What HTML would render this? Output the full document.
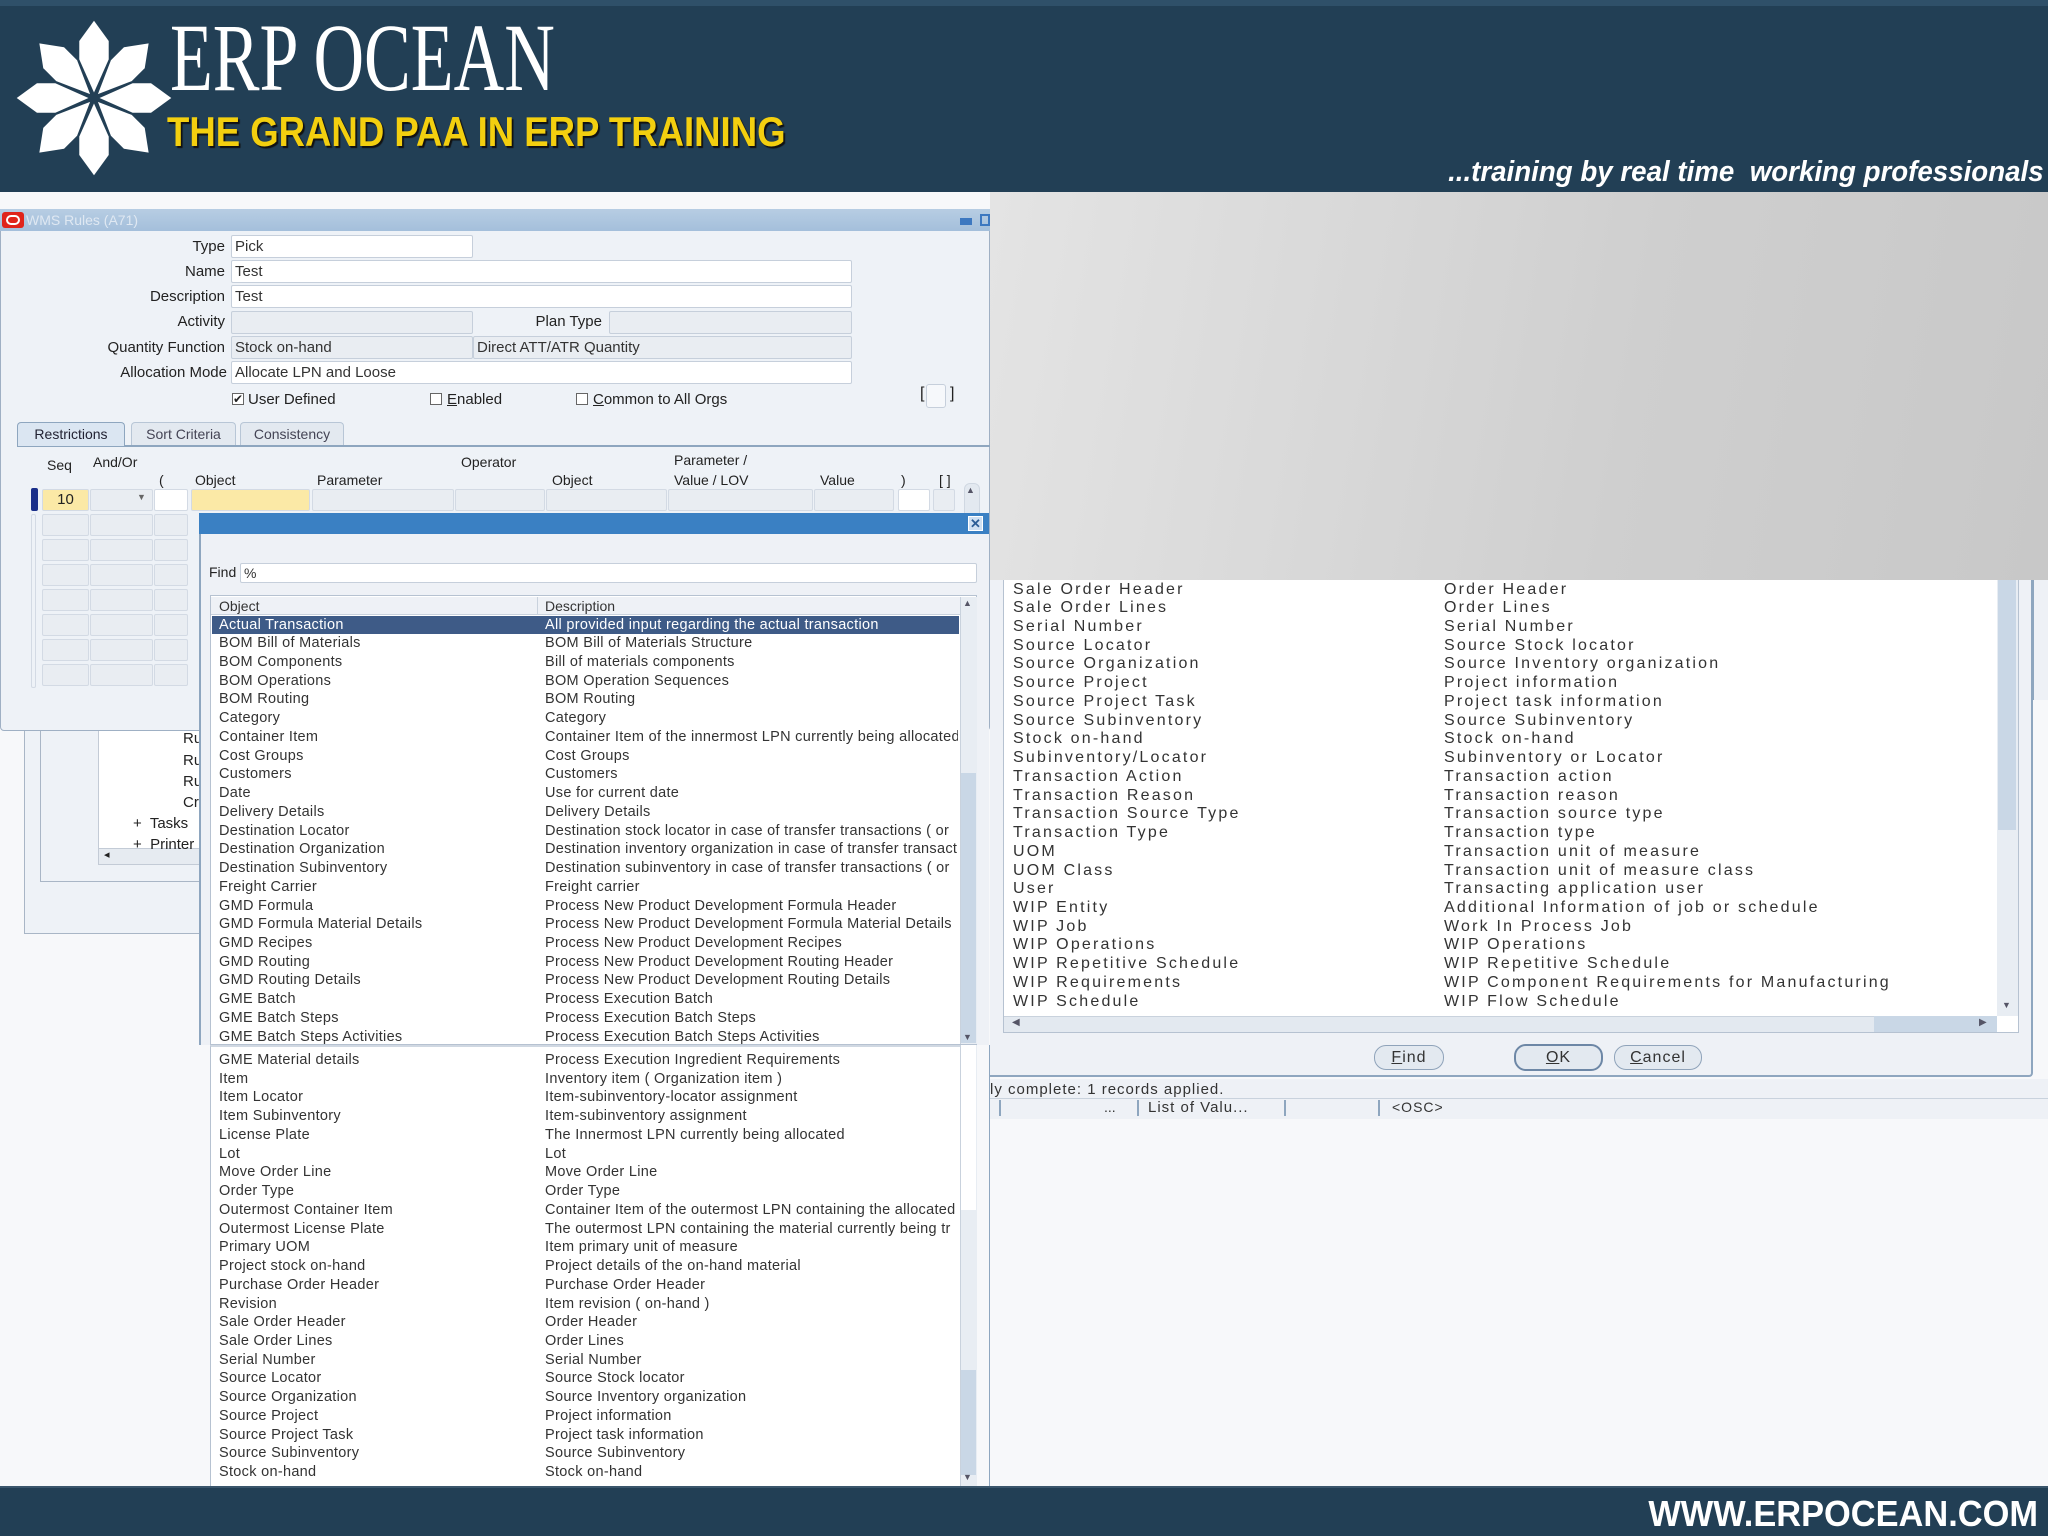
<!DOCTYPE html>
<html><head><meta charset="utf-8">
<style>
*{margin:0;padding:0;box-sizing:border-box}
body{width:2048px;height:1536px;position:relative;overflow:hidden;background:#f7f8fa;font-family:"Liberation Sans",sans-serif;color:#222}
.abs{position:absolute}
.hdr{left:0;top:0;width:2048px;height:192px;background:#223f55;border-top:6px solid #2f5069}
.ftr{left:0;top:1486px;width:2048px;height:50px;background:#223f55;border-top:2px solid #3a566c}
.fld{position:absolute;height:23px;background:#fff;border:1px solid #c6cfdb;border-radius:2px;font-size:15px;line-height:21px;padding-left:3px;color:#333}
.gf{background:#e9edf2}
.lbl{position:absolute;font-size:15px;color:#222;text-align:right;white-space:nowrap}
.t{position:absolute;font-size:15px;white-space:nowrap;color:#222}
.row{height:18.74px;line-height:18.74px;font-size:14.5px;letter-spacing:0.3px;white-space:nowrap;position:relative;color:#333}
.row span{position:absolute;top:0;overflow:hidden}
.row .a{left:9px;width:320px}
.row .b{left:335px;width:413px}
.rr{height:18.74px;line-height:18.74px;font-size:16px;letter-spacing:2.2px;white-space:nowrap;position:relative;color:#333}
.rr span{position:absolute;top:0}
.rr .a{left:10px}
.rr .b{left:441px}
.cell{position:absolute;height:22px;border:1px solid #d3dae4;border-radius:2px;background:#e9edf2}
.btn{position:absolute;height:25px;border:1px solid #8fa3ba;border-radius:12px;background:#e3e9f0;font-size:16px;line-height:23px;text-align:center;letter-spacing:1px;color:#333}
</style></head><body>

<div class="abs hdr"></div>
<svg class="abs" style="left:0;top:0" width="200" height="192" viewBox="0 0 200 192">
 <g transform="translate(94,98) scale(0.92)" fill="#fff">
  <g id="p"><polygon points="0,-6 16,-42 16,-62 0,-84 -16,-62 -16,-42"/></g>
  <use href="#p" transform="rotate(45)"/><use href="#p" transform="rotate(90)"/><use href="#p" transform="rotate(135)"/>
  <use href="#p" transform="rotate(180)"/><use href="#p" transform="rotate(225)"/><use href="#p" transform="rotate(270)"/><use href="#p" transform="rotate(315)"/>
 </g>
</svg>
<div class="abs" style="left:170px;top:8px;font-family:'Liberation Serif',serif;font-size:96px;color:#fff;transform:scaleX(0.73);transform-origin:0 0;white-space:nowrap;line-height:100px">ERP OCEAN</div>
<div class="abs" style="left:167px;top:108px;font-weight:bold;font-size:42px;color:#f3cf0f;transform:scaleX(0.87);transform-origin:0 0;white-space:nowrap;line-height:48px;text-shadow:2px 2px 1px #111">THE GRAND PAA IN ERP TRAINING</div>
<div class="abs" style="right:4px;top:155px;font-style:italic;font-weight:bold;font-size:29px;color:#fff;transform:scaleX(0.955);transform-origin:100% 0;white-space:nowrap;line-height:34px">...training by real time&nbsp; working professionals</div>

<div class="abs" style="left:990px;top:192px;width:1058px;height:388px;background:linear-gradient(100deg,#e4e4e4,#cfcfcf 60%,#c8c8c8)"></div>

<div class="abs" style="left:24px;top:700px;width:300px;height:234px;border:1px solid #a9b6c6;border-top:none;background:#eef2f7"></div>
<div class="abs" style="left:40px;top:700px;width:280px;height:182px;border:1px solid #a9b6c6;border-top:none;background:#eef2f7"></div>
<div class="abs" style="left:98px;top:700px;width:220px;height:165px;background:#fff;border-left:1px solid #c3cbd6"></div>
<div class="abs" style="left:98px;top:848px;width:220px;height:17px;background:#e6ebf1;border:1px solid #c3cbd6"></div>
<div class="t" style="left:104px;top:848px;font-size:11px">◂</div>
<div class="t" style="left:183px;top:730px">Ru</div>
<div class="t" style="left:183px;top:752px">Ru</div>
<div class="t" style="left:183px;top:773px">Ru</div>
<div class="t" style="left:183px;top:794px">Cr</div>
<div class="t" style="left:133px;top:815px">+&nbsp; Tasks</div>
<div class="t" style="left:133px;top:836px">+&nbsp; Printer</div>

<div class="abs" style="left:0;top:209px;width:990px;height:522px;background:#eef2f7;border:1px solid #9fb0c4;border-radius:0 0 4px 4px"></div>
<div class="abs" style="left:0;top:209px;width:990px;height:22px;background:linear-gradient(#b7cde3,#a4bfdb)"></div>
<div class="abs" style="left:2px;top:212px;width:22px;height:16px;background:#e0241b;border-radius:3px"></div>
<div class="abs" style="left:6px;top:215px;width:14px;height:10px;border:2px solid #fff;border-radius:5px"></div>
<div class="t" style="left:26px;top:212px;color:#dfe8f2;font-size:14px">WMS Rules (A71)</div>
<div class="abs" style="left:960px;top:218px;width:12px;height:7px;background:#3d78c0"></div>
<div class="abs" style="left:980px;top:214px;width:10px;height:12px;border:2px solid #3d78c0"></div>

<div class="lbl" style="right:1823px;top:238px">Type</div>
<div class="fld" style="left:231px;top:235px;width:242px">Pick</div>
<div class="lbl" style="right:1823px;top:263px">Name</div>
<div class="fld" style="left:231px;top:260px;width:621px">Test</div>
<div class="lbl" style="right:1823px;top:288px">Description</div>
<div class="fld" style="left:231px;top:285px;width:621px">Test</div>
<div class="lbl" style="right:1823px;top:313px">Activity</div>
<div class="fld gf" style="left:231px;top:311px;width:242px"></div>
<div class="lbl" style="right:1446px;top:313px">Plan Type</div>
<div class="fld gf" style="left:609px;top:311px;width:243px"></div>
<div class="lbl" style="right:1823px;top:339px">Quantity Function</div>
<div class="fld gf" style="left:231px;top:336px;width:242px">Stock on-hand</div>
<div class="fld gf" style="left:473px;top:336px;width:379px">Direct ATT/ATR Quantity</div>
<div class="lbl" style="right:1821px;top:364px">Allocation Mode</div>
<div class="fld" style="left:231px;top:361px;width:621px">Allocate LPN and Loose</div>

<div class="abs" style="left:232px;top:393px;width:12px;height:12px;border:1px solid #666;background:#fff;font-size:12px;line-height:10px">✔</div>
<div class="t" style="left:248px;top:391px">User Defined</div>
<div class="abs" style="left:430px;top:393px;width:12px;height:12px;border:1px solid #666;background:#fff"></div>
<div class="t" style="left:447px;top:391px"><u>E</u>nabled</div>
<div class="abs" style="left:576px;top:393px;width:12px;height:12px;border:1px solid #666;background:#fff"></div>
<div class="t" style="left:593px;top:391px"><u>C</u>ommon to All Orgs</div>
<div class="t" style="left:920px;top:385px;font-size:16px">[</div>
<div class="abs" style="left:926px;top:384px;width:20px;height:24px;border:1px solid #c6cfdb;border-radius:3px;background:#f6f8fb"></div>
<div class="t" style="left:950px;top:385px;font-size:16px">]</div>

<div class="abs" style="left:17px;top:445px;width:973px;height:2px;background:#8ea6bf"></div>
<div class="abs" style="left:17px;top:422px;width:108px;height:24px;background:#dbe6f2;border:1px solid #8ea6bf;border-bottom:none;border-radius:4px 4px 0 0;font-size:14px;line-height:22px;text-align:center;color:#223">Restrictions</div>
<div class="abs" style="left:131px;top:422px;width:105px;height:23px;background:#e3e9f0;border:1px solid #b8c6d6;border-bottom:none;border-radius:4px 4px 0 0;font-size:14px;line-height:22px;text-align:center;color:#445">Sort Criteria</div>
<div class="abs" style="left:240px;top:422px;width:104px;height:23px;background:#e3e9f0;border:1px solid #b8c6d6;border-bottom:none;border-radius:4px 4px 0 0;font-size:14px;line-height:22px;text-align:center;color:#445">Consistency</div>

<div class="t" style="left:47px;top:457px;font-size:14px">Seq</div>
<div class="t" style="left:93px;top:454px;font-size:14px">And/Or</div>
<div class="t" style="left:461px;top:454px;font-size:14px">Operator</div>
<div class="t" style="left:674px;top:452px;font-size:14px">Parameter /</div>
<div class="t" style="left:159px;top:472px;font-size:14px">(</div>
<div class="t" style="left:195px;top:472px;font-size:14px">Object</div>
<div class="t" style="left:317px;top:472px;font-size:14px">Parameter</div>
<div class="t" style="left:552px;top:472px;font-size:14px">Object</div>
<div class="t" style="left:674px;top:472px;font-size:14px">Value / LOV</div>
<div class="t" style="left:820px;top:472px;font-size:14px">Value</div>
<div class="t" style="left:901px;top:472px;font-size:14px">)</div>
<div class="t" style="left:939px;top:472px;font-size:14px">[ ]</div>

<div class="abs" style="left:31px;top:488px;width:7px;height:23px;background:#1a2f8a;border-radius:2px"></div>
<div class="cell" style="left:42px;top:489px;width:47px;background:#fbe9a6;font-size:15px;line-height:20px;text-align:center">10</div>
<div class="cell" style="left:90px;top:489px;width:63px"></div><div class="t" style="left:137px;top:492px;font-size:9px;color:#666">▼</div>
<div class="cell" style="left:154px;top:489px;width:34px;background:#fff"></div>
<div class="cell" style="left:191px;top:489px;width:119px;background:#fbe9a6"></div>
<div class="cell" style="left:312px;top:489px;width:142px"></div>
<div class="cell" style="left:455px;top:489px;width:90px"></div>
<div class="cell" style="left:546px;top:489px;width:121px"></div>
<div class="cell" style="left:668px;top:489px;width:145px"></div>
<div class="cell" style="left:814px;top:489px;width:80px"></div>
<div class="cell" style="left:898px;top:489px;width:32px;background:#fff"></div>
<div class="cell" style="left:933px;top:489px;width:22px"></div>
<div class="abs" style="left:964px;top:483px;width:16px;height:250px;background:#e3e9f0;border-radius:6px;border:1px solid #d0d8e2"></div>
<div class="t" style="left:966px;top:485px;font-size:9px;color:#556">▲</div>

<div class="cell" style="left:42px;top:514px;width:47px"></div><div class="cell" style="left:90px;top:514px;width:63px"></div><div class="cell" style="left:154px;top:514px;width:34px"></div>
<div class="cell" style="left:42px;top:539px;width:47px"></div><div class="cell" style="left:90px;top:539px;width:63px"></div><div class="cell" style="left:154px;top:539px;width:34px"></div>
<div class="cell" style="left:42px;top:564px;width:47px"></div><div class="cell" style="left:90px;top:564px;width:63px"></div><div class="cell" style="left:154px;top:564px;width:34px"></div>
<div class="cell" style="left:42px;top:589px;width:47px"></div><div class="cell" style="left:90px;top:589px;width:63px"></div><div class="cell" style="left:154px;top:589px;width:34px"></div>
<div class="cell" style="left:42px;top:614px;width:47px"></div><div class="cell" style="left:90px;top:614px;width:63px"></div><div class="cell" style="left:154px;top:614px;width:34px"></div>
<div class="cell" style="left:42px;top:639px;width:47px"></div><div class="cell" style="left:90px;top:639px;width:63px"></div><div class="cell" style="left:154px;top:639px;width:34px"></div>
<div class="cell" style="left:42px;top:664px;width:47px"></div><div class="cell" style="left:90px;top:664px;width:63px"></div><div class="cell" style="left:154px;top:664px;width:34px"></div>
<div class="abs" style="left:31px;top:514px;width:5px;height:174px;border:1px solid #d3dae4;border-radius:2px"></div>

<div class="abs" style="left:199px;top:513px;width:790px;height:532px;background:#eef1f6;border-left:2px solid #8ea6bf"></div>
<div class="abs" style="left:199px;top:513px;width:790px;height:21px;background:#3a80c3"></div>
<div class="abs" style="left:968px;top:516px;width:15px;height:15px;background:#cfe0f2;border:1px solid #fff;color:#2b5d96;font-size:13px;line-height:13px;text-align:center;font-weight:bold">✕</div>
<div class="t" style="left:209px;top:564px;font-size:14px">Find</div>
<div class="fld" style="left:240px;top:563px;width:737px;height:20px;line-height:18px;font-size:14px">%</div>

<div class="abs" style="left:210px;top:595px;width:767px;height:450px;background:#fff;border:1px solid #b6c2d1"></div>
<div class="abs" style="left:211px;top:597px;width:749px;height:18px;background:#eef1f6;border-bottom:1px solid #c9d2dd"></div>
<div class="abs" style="left:537px;top:597px;width:1px;height:18px;background:#c9d2dd"></div>
<div class="t" style="left:219px;top:598px;font-size:14px;color:#333">Object</div>
<div class="t" style="left:545px;top:598px;font-size:14px;color:#333">Description</div>
<div class="abs" style="left:960px;top:597px;width:17px;height:447px;background:#e8edf3;border-left:1px solid #c9d2dd"></div>
<div class="abs" style="left:961px;top:773px;width:15px;height:270px;background:#c9d7e6"></div>
<div class="t" style="left:963px;top:598px;font-size:9px;color:#556">▲</div>
<div class="t" style="left:963px;top:1032px;font-size:9px;color:#556">▼</div>
<div class="abs" style="left:212px;top:616px;width:747px;height:18px;background:#3e5b87"></div>

<div class="abs" style="left:210px;top:615.5px;width:750px">
<div class="row" style="color:#fff"><span class="a">Actual Transaction</span><span class="b">All provided input regarding the actual transaction</span></div>
<div class="row"><span class="a">BOM Bill of Materials</span><span class="b">BOM Bill of Materials Structure</span></div>
<div class="row"><span class="a">BOM Components</span><span class="b">Bill of materials components</span></div>
<div class="row"><span class="a">BOM Operations</span><span class="b">BOM Operation Sequences</span></div>
<div class="row"><span class="a">BOM Routing</span><span class="b">BOM Routing</span></div>
<div class="row"><span class="a">Category</span><span class="b">Category</span></div>
<div class="row"><span class="a">Container Item</span><span class="b">Container Item of the innermost LPN currently being allocated</span></div>
<div class="row"><span class="a">Cost Groups</span><span class="b">Cost Groups</span></div>
<div class="row"><span class="a">Customers</span><span class="b">Customers</span></div>
<div class="row"><span class="a">Date</span><span class="b">Use for current date</span></div>
<div class="row"><span class="a">Delivery Details</span><span class="b">Delivery Details</span></div>
<div class="row"><span class="a">Destination Locator</span><span class="b">Destination stock locator in case of transfer transactions ( or</span></div>
<div class="row"><span class="a">Destination Organization</span><span class="b">Destination inventory organization in case of transfer transactions</span></div>
<div class="row"><span class="a">Destination Subinventory</span><span class="b">Destination subinventory in case of transfer transactions ( or</span></div>
<div class="row"><span class="a">Freight Carrier</span><span class="b">Freight carrier</span></div>
<div class="row"><span class="a">GMD Formula</span><span class="b">Process New Product Development Formula Header</span></div>
<div class="row"><span class="a">GMD Formula Material Details</span><span class="b">Process New Product Development Formula Material Details</span></div>
<div class="row"><span class="a">GMD Recipes</span><span class="b">Process New Product Development Recipes</span></div>
<div class="row"><span class="a">GMD Routing</span><span class="b">Process New Product Development Routing Header</span></div>
<div class="row"><span class="a">GMD Routing Details</span><span class="b">Process New Product Development Routing Details</span></div>
<div class="row"><span class="a">GME Batch</span><span class="b">Process Execution Batch</span></div>
<div class="row"><span class="a">GME Batch Steps</span><span class="b">Process Execution Batch Steps</span></div>
<div class="row"><span class="a">GME Batch Steps Activities</span><span class="b">Process Execution Batch Steps Activities</span></div>
</div>

<div class="abs" style="left:210px;top:1045px;width:750px;height:441px;background:#fff;border-left:1px solid #b6c2d1;border-top:2px solid #d0d8e2"></div>
<div class="abs" style="left:960px;top:1045px;width:17px;height:441px;background:#e8edf3;border-left:1px solid #c9d2dd"></div>
<div class="abs" style="left:961px;top:1045px;width:15px;height:165px;background:#fff"></div>
<div class="abs" style="left:961px;top:1370px;width:15px;height:105px;background:#c9d7e6"></div>
<div class="t" style="left:963px;top:1472px;font-size:9px;color:#556">▼</div>
<div class="abs" style="left:989px;top:1045px;width:1px;height:441px;background:#8ea6bf"></div>
<div class="abs" style="left:210px;top:1051px;width:750px">
<div class="row"><span class="a">GME Material details</span><span class="b">Process Execution Ingredient Requirements</span></div>
<div class="row"><span class="a">Item</span><span class="b">Inventory item ( Organization item )</span></div>
<div class="row"><span class="a">Item Locator</span><span class="b">Item-subinventory-locator assignment</span></div>
<div class="row"><span class="a">Item Subinventory</span><span class="b">Item-subinventory assignment</span></div>
<div class="row"><span class="a">License Plate</span><span class="b">The Innermost LPN currently being allocated</span></div>
<div class="row"><span class="a">Lot</span><span class="b">Lot</span></div>
<div class="row"><span class="a">Move Order Line</span><span class="b">Move Order Line</span></div>
<div class="row"><span class="a">Order Type</span><span class="b">Order Type</span></div>
<div class="row"><span class="a">Outermost Container Item</span><span class="b">Container Item of the outermost LPN containing the allocated</span></div>
<div class="row"><span class="a">Outermost License Plate</span><span class="b">The outermost LPN containing the material currently being tr</span></div>
<div class="row"><span class="a">Primary UOM</span><span class="b">Item primary unit of measure</span></div>
<div class="row"><span class="a">Project stock on-hand</span><span class="b">Project details of the on-hand material</span></div>
<div class="row"><span class="a">Purchase Order Header</span><span class="b">Purchase Order Header</span></div>
<div class="row"><span class="a">Revision</span><span class="b">Item revision ( on-hand )</span></div>
<div class="row"><span class="a">Sale Order Header</span><span class="b">Order Header</span></div>
<div class="row"><span class="a">Sale Order Lines</span><span class="b">Order Lines</span></div>
<div class="row"><span class="a">Serial Number</span><span class="b">Serial Number</span></div>
<div class="row"><span class="a">Source Locator</span><span class="b">Source Stock locator</span></div>
<div class="row"><span class="a">Source Organization</span><span class="b">Source Inventory organization</span></div>
<div class="row"><span class="a">Source Project</span><span class="b">Project information</span></div>
<div class="row"><span class="a">Source Project Task</span><span class="b">Project task information</span></div>
<div class="row"><span class="a">Source Subinventory</span><span class="b">Source Subinventory</span></div>
<div class="row"><span class="a">Stock on-hand</span><span class="b">Stock on-hand</span></div>
</div>

<div class="abs" style="left:990px;top:580px;width:1043px;height:497px;background:#eef1f6;border-right:2px solid #8ea6bf;border-bottom:2px solid #8ea6bf;border-radius:0 0 4px 0"></div>
<div class="abs" style="left:2033px;top:580px;width:15px;height:120px;background:#eef1f6;border-left:1px solid #8ea6bf"></div>
<div class="abs" style="left:1003px;top:580px;width:1016px;height:453px;background:#fff;border:1px solid #b6c2d1;border-top:none"></div>
<div class="abs" style="left:1997px;top:580px;width:21px;height:436px;background:#e8edf3"></div>
<div class="abs" style="left:1998px;top:580px;width:18px;height:250px;background:#c9d7e6"></div>
<div class="t" style="left:2002px;top:1000px;font-size:9px;color:#556">▼</div>
<div class="abs" style="left:1004px;top:1016px;width:993px;height:16px;background:#e3e9f0;border-top:1px solid #c9d2dd"></div>
<div class="abs" style="left:1874px;top:1016px;width:123px;height:16px;background:#c9d7e6"></div>
<div class="t" style="left:1012px;top:1017px;font-size:10px;color:#556">◀</div>
<div class="t" style="left:1979px;top:1017px;font-size:10px;color:#556">▶</div>
<div class="abs" style="left:1003px;top:580.5px;width:990px">
<div class="rr"><span class="a">Sale Order Header</span><span class="b">Order Header</span></div>
<div class="rr"><span class="a">Sale Order Lines</span><span class="b">Order Lines</span></div>
<div class="rr"><span class="a">Serial Number</span><span class="b">Serial Number</span></div>
<div class="rr"><span class="a">Source Locator</span><span class="b">Source Stock locator</span></div>
<div class="rr"><span class="a">Source Organization</span><span class="b">Source Inventory organization</span></div>
<div class="rr"><span class="a">Source Project</span><span class="b">Project information</span></div>
<div class="rr"><span class="a">Source Project Task</span><span class="b">Project task information</span></div>
<div class="rr"><span class="a">Source Subinventory</span><span class="b">Source Subinventory</span></div>
<div class="rr"><span class="a">Stock on-hand</span><span class="b">Stock on-hand</span></div>
<div class="rr"><span class="a">Subinventory/Locator</span><span class="b">Subinventory or Locator</span></div>
<div class="rr"><span class="a">Transaction Action</span><span class="b">Transaction action</span></div>
<div class="rr"><span class="a">Transaction Reason</span><span class="b">Transaction reason</span></div>
<div class="rr"><span class="a">Transaction Source Type</span><span class="b">Transaction source type</span></div>
<div class="rr"><span class="a">Transaction Type</span><span class="b">Transaction type</span></div>
<div class="rr"><span class="a">UOM</span><span class="b">Transaction unit of measure</span></div>
<div class="rr"><span class="a">UOM Class</span><span class="b">Transaction unit of measure class</span></div>
<div class="rr"><span class="a">User</span><span class="b">Transacting application user</span></div>
<div class="rr"><span class="a">WIP Entity</span><span class="b">Additional Information of job or schedule</span></div>
<div class="rr"><span class="a">WIP Job</span><span class="b">Work In Process Job</span></div>
<div class="rr"><span class="a">WIP Operations</span><span class="b">WIP Operations</span></div>
<div class="rr"><span class="a">WIP Repetitive Schedule</span><span class="b">WIP Repetitive Schedule</span></div>
<div class="rr"><span class="a">WIP Requirements</span><span class="b">WIP Component Requirements for Manufacturing</span></div>
<div class="rr"><span class="a">WIP Schedule</span><span class="b">WIP Flow Schedule</span></div>
</div>
<div class="btn" style="left:1374px;top:1045px;width:70px"><u>F</u>ind</div>
<div class="btn" style="left:1514px;top:1044px;width:89px;height:27px;border:2px solid #6d87a6"><u>O</u>K</div>
<div class="btn" style="left:1614px;top:1045px;width:88px"><u>C</u>ancel</div>

<div class="abs" style="left:990px;top:1079px;width:1058px;height:40px;background:#eef1f6"></div>
<div class="t" style="left:990px;top:1081px;font-size:15px;letter-spacing:1px;color:#333">ly complete: 1 records applied.</div>
<div class="abs" style="left:990px;top:1098px;width:1058px;height:1px;background:#c9d2dd"></div>
<div class="abs" style="left:999px;top:1100px;width:2px;height:16px;background:#8ea6bf"></div>
<div class="t" style="left:1104px;top:1099px;font-size:14px;color:#333">...</div>
<div class="abs" style="left:1137px;top:1100px;width:2px;height:16px;background:#8ea6bf"></div>
<div class="t" style="left:1148px;top:1099px;font-size:15px;letter-spacing:1px;color:#333">List of Valu...</div>
<div class="abs" style="left:1284px;top:1100px;width:2px;height:16px;background:#8ea6bf"></div>
<div class="abs" style="left:1378px;top:1100px;width:2px;height:16px;background:#8ea6bf"></div>
<div class="t" style="left:1392px;top:1099px;font-size:14px;letter-spacing:1px;color:#333">&lt;OSC&gt;</div>

<div class="abs ftr"></div>
<div class="abs" style="right:10px;top:1494px;font-weight:bold;font-size:36px;color:#fff;transform:scaleX(0.955);transform-origin:100% 0;white-space:nowrap;line-height:40px">WWW.ERPOCEAN.COM</div>
</body></html>
